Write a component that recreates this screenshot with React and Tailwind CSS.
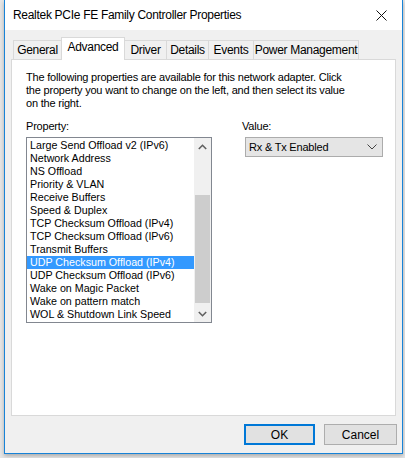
const items = [
  "Large Send Offload v2 (IPv6)",
  "Network Address",
  "NS Offload",
  "Priority & VLAN",
  "Receive Buffers",
  "Speed & Duplex",
  "TCP Checksum Offload (IPv4)",
  "TCP Checksum Offload (IPv6)",
  "Transmit Buffers",
  "UDP Checksum Offload (IPv4)",
  "UDP Checksum Offload (IPv6)",
  "Wake on Magic Packet",
  "Wake on pattern match",
  "WOL & Shutdown Link Speed",
];

const tabs = ["General", "Advanced", "Driver", "Details", "Events", "Power Management"];
const tabWidths = [49, 64, 43, 43, 46, 106];

export default function App() {
  const ui = { fontFamily: '"Liberation Sans", Arial, sans-serif' };
  return (
    <div className="w-[405px] h-[458px] bg-[#e6e6e6] pl-[4px] overflow-hidden" style={ui}>
      <div className="w-[399px] h-[454px] border-x border-b border-[#1883d7] bg-[#f0f0f0] flex flex-col shadow-[0_2px_4px_rgba(0,0,0,0.25)]">
        {/* title bar */}
        <div className="h-[30px] bg-white flex items-center justify-between pl-[8px] pr-[15px] shrink-0">
          <span className="text-[12px] tracking-[-0.3px] text-black leading-none">
            Realtek PCIe FE Family Controller Properties
          </span>
          <svg width="11" height="11" viewBox="0 0 11 11">
            <path d="M0.5 0.5 L10.5 10.5 M10.5 0.5 L0.5 10.5" stroke="#111" strokeWidth="1" fill="none" />
          </svg>
        </div>
        {/* client */}
        <div className="flex-1 flex flex-col px-[6px] pt-[7px]">
          {/* tabs */}
          <div className="flex items-end h-[22px] pl-[2px]">
            {tabs.map((t, i) => {
              const sel = i === 1;
              return (
                <div
                  key={t}
                  style={{ width: tabWidths[i] }}
                  className={
                    sel
                      ? "relative z-10 h-[23px] -mb-px -mr-px bg-white border border-b-0 border-[#d9d9d9] text-[12px] tracking-[-0.3px] flex items-start justify-center pt-[3px] text-black leading-[13px]"
                      : "h-[19px] -mr-px bg-[#f0f0f0] border border-b-0 border-[#d9d9d9] text-[12px] tracking-[-0.3px] flex items-center justify-center text-black leading-[13px]"
                  }
                >
                  {t}
                </div>
              );
            })}
          </div>
          {/* panel */}
          <div className="w-[385px] h-[357px] bg-white border border-[#d9d9d9] pl-[14px] pr-[12px] pt-[11px]">
            <div className="text-[11px] tracking-[-0.2px] leading-[13px] text-black">
              <div className="whitespace-nowrap">The following properties are available for this network adapter. Click</div>
              <div className="whitespace-nowrap">the property you want to change on the left, and then select its value</div>
              <div className="whitespace-nowrap">on the right.</div>
            </div>
            <div className="flex mt-[10px]">
              {/* property column */}
              <div className="w-[186px] flex flex-col">
                <div className="text-[11px] tracking-[-0.2px] leading-[13px] text-black">Property:</div>
                <div className="mt-[4px] w-[186px] h-[186px] border border-[#828790] bg-white flex">
                  <div className="flex-1 pt-px">
                    {items.map((it, i) => (
                      <div
                        key={it}
                        className={
                          "h-[13px] leading-[13px] pl-[3px] whitespace-nowrap text-[10.7px] " +
                          (i === 9 ? "bg-[#3399ff] text-white" : "text-black")
                        }
                      >
                        {it}
                      </div>
                    ))}
                  </div>
                  {/* scrollbar */}
                  <div className="w-[17px] bg-[#f0f0f0] flex flex-col">
                    <div className="h-[17px] flex items-center justify-center">
                      <svg width="9" height="6" viewBox="0 0 9 6">
                        <path d="M0.8 5 L4.5 1.3 L8.2 5" stroke="#606060" strokeWidth="1.6" fill="none" />
                      </svg>
                    </div>
                    <div className="flex-1 flex flex-col px-px">
                      <div className="h-[40px]"></div>
                      <div className="flex-1 bg-[#cdcdcd]"></div>
                      <div className="h-[2px]"></div>
                    </div>
                    <div className="h-[17px] flex items-center justify-center">
                      <svg width="9" height="6" viewBox="0 0 9 6">
                        <path d="M0.8 1 L4.5 4.7 L8.2 1" stroke="#606060" strokeWidth="1.6" fill="none" />
                      </svg>
                    </div>
                  </div>
                </div>
              </div>
              {/* value column */}
              <div className="ml-[30px] flex flex-col">
                <div className="text-[11px] tracking-[-0.2px] leading-[13px] text-black">Value:</div>
                <div className="mt-[4px] ml-[3px] w-[138px] h-[20px] bg-[#e5e5e5] border border-[#acacac] flex items-center justify-between pl-[3px] pr-[5px]">
                  <span className="text-[11px] tracking-[-0.2px] text-black leading-none">Rx &amp; Tx Enabled</span>
                  <svg width="10" height="6" viewBox="0 0 10 6">
                    <path d="M0.5 0.5 L5 5 L9.5 0.5" stroke="#444" strokeWidth="1" fill="none" />
                  </svg>
                </div>
              </div>
            </div>
          </div>
          {/* buttons */}
          <div className="flex justify-end gap-[9px] mt-[8px] -mr-px">
            <button className="w-[71px] h-[21px] bg-[#e1e1e1] border-2 border-[#0078d7] text-[12px] text-black leading-none">
              OK
            </button>
            <button className="w-[73px] h-[21px] bg-[#e1e1e1] border border-[#adadad] text-[12px] text-black leading-none">
              Cancel
            </button>
          </div>
        </div>
      </div>
    </div>
  );
}
